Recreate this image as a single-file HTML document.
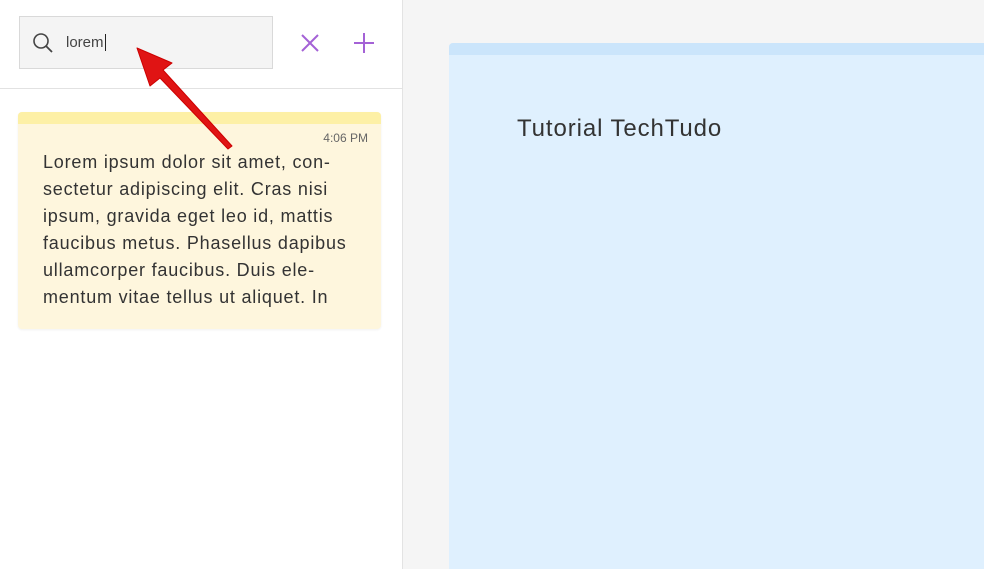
<!DOCTYPE html>
<html><head><meta charset="utf-8"><style>
*{margin:0;padding:0;box-sizing:border-box}
body{width:984px;height:569px;overflow:hidden;background:#f5f5f5;font-family:"Liberation Sans",sans-serif;position:relative}
.left{position:absolute;left:0;top:0;width:403px;height:569px;background:#fff;border-right:1px solid #e3e3e3}
.search{position:absolute;left:19px;top:16px;width:254px;height:53px;background:#f4f4f4;border:1px solid #d9d9d9}
.search span{position:absolute;left:46px;top:17px;font-size:15px;color:#444}
.div{position:absolute;left:0;top:88px;width:403px;height:1px;background:#e2e2e2}
.card{position:absolute;left:18px;top:112px;width:363px;height:217px;background:#fef6dd;border-radius:4px;overflow:hidden;box-shadow:0 1px 2px rgba(0,0,0,.06)}
.card .strip{height:12px;background:#fdf0a6}
.time{position:absolute;right:13px;top:19px;font-size:12px;color:#666}
.txt{position:absolute;left:25px;top:37px;font-size:18px;letter-spacing:0.8px;line-height:27px;color:#333;white-space:nowrap}
.blue{position:absolute;left:449px;top:43px;width:535px;height:526px;background:#dff0fe;border-radius:4px 0 0 0;overflow:hidden}
.blue .strip{height:12px;background:#cbe5fb}
.title{position:absolute;left:68px;top:72px;font-size:24px;letter-spacing:0.9px;color:#333}
</style></head><body>
<div class="left">
<div class="search">
<svg style="position:absolute;left:12px;top:15px" width="22" height="22" viewBox="0 0 22 22"><circle cx="9" cy="9" r="7" fill="none" stroke="#444" stroke-width="1.6"/><line x1="14" y1="14" x2="20" y2="20" stroke="#444" stroke-width="1.8"/></svg>
<span>lorem<span style="position:static;border-left:1.5px solid #222;margin-left:1px"></span></span>
</div>
<svg style="position:absolute;left:299px;top:32px" width="22" height="22"><path d="M3 3L19 19M19 3L3 19" stroke="#a462d6" stroke-width="2"/></svg>
<svg style="position:absolute;left:352px;top:31px" width="24" height="24"><path d="M12 2V22M2 12H22" stroke="#a462d6" stroke-width="2"/></svg>
<div class="div"></div>
<div class="card"><div class="strip"></div><div class="time">4:06 PM</div>
<div class="txt">Lorem ipsum dolor sit amet, con-<br>sectetur adipiscing elit. Cras nisi<br>ipsum, gravida eget leo id, mattis<br>faucibus metus. Phasellus dapibus<br>ullamcorper faucibus. Duis ele-<br>mentum vitae tellus ut aliquet. In</div></div>
</div>
<div class="blue"><div class="strip"></div><div class="title">Tutorial TechTudo</div></div>
<svg style="position:absolute;left:0;top:0" width="400" height="200"><path d="M232 146 L228 149 L160 78 L150 86 L137 48 L172 63 L163 70 Z" fill="#e01414" stroke="#c00" stroke-width="1" stroke-linejoin="round"/></svg>
</body></html>
